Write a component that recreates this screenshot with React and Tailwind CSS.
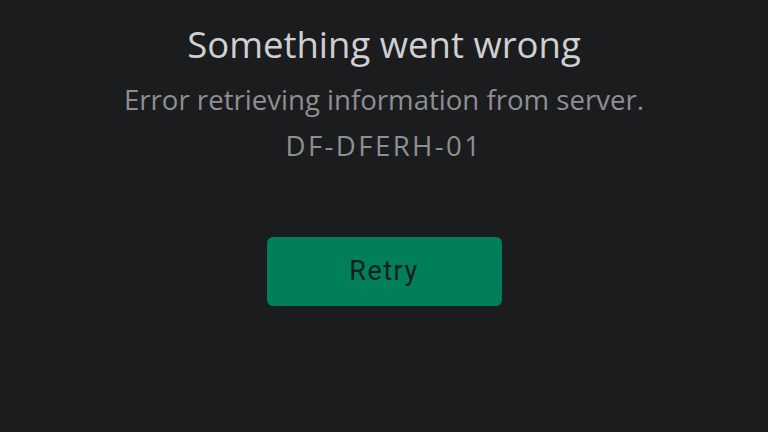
export default function App() {
  return (
    <div className="flex h-[432px] w-[768px] flex-col items-center bg-[#1b1c1e] pt-[19px]" style={{ fontFamily: "'Open Sans', 'Noto Sans', sans-serif" }}>
      <h1 className="text-[36.5px] leading-[50px] text-[#d0d0d0]">Something went wrong</h1>
      <p className="mt-[11px] text-[27.6px] leading-[38px] text-[#8e8f91]">Error retrieving information from server.</p>
      <p className="mt-[8px] text-[27.6px] leading-[38px] tracking-[2.4px] text-[#8e8f91]">DF-DFERH-01</p>
      <button
        type="button"
        className="mt-[73px] flex h-[69px] w-[235px] items-center justify-center rounded-[6px] bg-[#017f5a] text-[27px] tracking-[1.5px] text-[#17201c]"
        style={{ fontFamily: "Roboto, sans-serif" }}
      >
        Retry
      </button>
    </div>
  );
}
